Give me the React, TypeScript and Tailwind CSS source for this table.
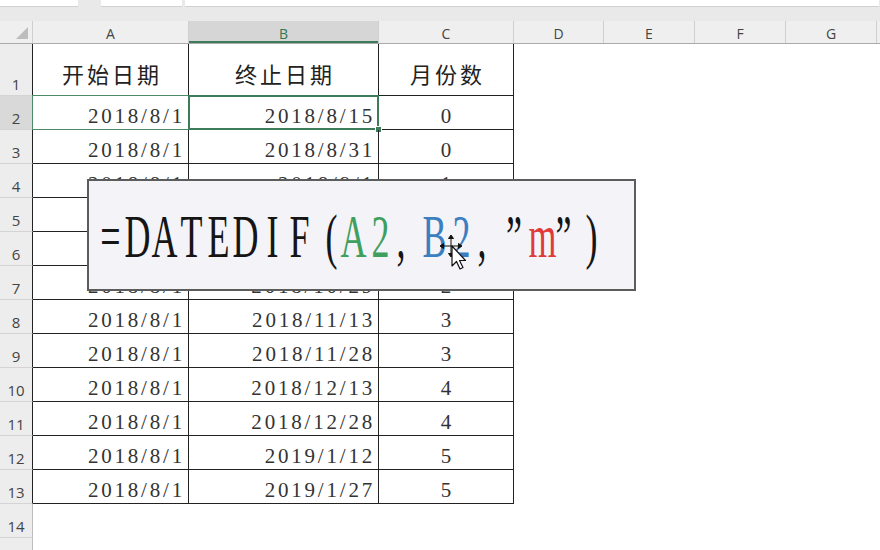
import React from 'react';

const colWidths = ['w-[156px]', 'w-[190px]', 'w-[135px]', 'w-[90px]', 'w-[91px]', 'w-[91px]', 'w-[91px]'];
const letters = ['A', 'B', 'C', 'D', 'E', 'F', 'G'];

const rows: [string, string, string][] = [
  ['2018/8/1', '2018/8/15', '0'],
  ['2018/8/1', '2018/8/31', '0'],
  ['2018/8/1', '2018/9/1', '1'],
  ['2018/8/1', '2018/9/15', '1'],
  ['2018/8/1', '2018/10/1', '2'],
  ['2018/8/1', '2018/10/29', '2'],
  ['2018/8/1', '2018/11/13', '3'],
  ['2018/8/1', '2018/11/28', '3'],
  ['2018/8/1', '2018/12/13', '4'],
  ['2018/8/1', '2018/12/28', '4'],
  ['2018/8/1', '2019/1/12', '5'],
  ['2018/8/1', '2019/1/27', '5'],
];

const ink = 'text-[#151515]';

// formula shown in the callout, one fixed-width cell per character
const formula: [string, string][] = [
  ['=', ink],
  ['D', ink],
  ['A', ink],
  ['T', ink],
  ['E', ink],
  ['D', ink],
  ['I', ink],
  ['F', ink],
  ['(', `${ink} pl-[10px]`],
  ['A', 'text-[#3f9f5f]'],
  ['2', 'text-[#3f9f5f]'],
  [',', `${ink} pr-[13px]`],
  ['B', 'text-[#3b7fc0]'],
  ['2', 'text-[#3b7fc0]'],
  [',', `${ink} pr-[13px]`],
  ['”', `${ink} pr-[3px]`],
  ['m', 'text-[#e03b3b]'],
  ['”', `${ink} pr-[12px]`],
  [')', `${ink} pr-[10px]`],
];

const serif = "font-['Liberation_Serif',serif] text-[21px] leading-none text-[#333]";

function RowHead({ n, inTable, active }: { n: number; inTable?: boolean; active?: boolean }) {
  return (
    <div
      className={`flex w-[33px] shrink-0 items-end justify-center border-b border-b-[#d4d4d4] border-r pb-[3px] font-['Open_Sans',sans-serif] text-[15px] leading-none text-[#444] ${
        active ? 'bg-[#d9d9d9]' : 'bg-[#ededed]'
      } ${inTable ? 'border-r-[#222]' : 'border-r-[#bdbdbd]'}`}
    >
      {n}
    </div>
  );
}

function Cursor() {
  return (
    <svg className="pointer-events-none absolute left-[436px] top-[231px]" width="34" height="42" viewBox="0 0 34 42">
      <g stroke="#111" strokeWidth="1" fill="#111">
        <line x1="15" y1="6" x2="15" y2="24" />
        <line x1="6" y1="15" x2="24" y2="15" />
        <path d="M15 4 L12.5 7.5 L17.5 7.5 Z" />
        <path d="M15 26 L12.5 22.5 L17.5 22.5 Z" />
        <path d="M4 15 L7.5 12.5 L7.5 17.5 Z" />
        <path d="M26 15 L22.5 12.5 L22.5 17.5 Z" />
      </g>
      <path
        d="M16 15 L16 35 L20.5 30.5 L24 38 L27 36.5 L23.5 29.5 L29.5 29.5 Z"
        fill="#fff"
        stroke="#111"
        strokeWidth="1.2"
        strokeLinejoin="round"
      />
    </svg>
  );
}

export default function App() {
  return (
    <div className="relative h-[550px] w-[880px] overflow-hidden bg-white">
      {/* formula bar remnants */}
      <div className="flex h-[21px] gap-[23px] bg-[#e9e9e9]">
        <div className="h-[7px] w-[78px] border-b border-[#d0d0d0] bg-white" />
        <div className="flex gap-[3px]">
          <div className="h-[7px] w-[81px] border-b border-[#d0d0d0] bg-white" />
          <div className="h-[7px] w-[694px] border-b border-[#d0d0d0] bg-white" />
        </div>
      </div>

      {/* column headers */}
      <div className="flex h-[23px] border-b border-[#ababab] bg-[#efefef]">
        <div className="relative w-[33px] shrink-0 border-r border-[#cfcfcf]">
          <svg className="absolute left-0 top-0" width="33" height="22" viewBox="0 0 33 22">
            <path d="M28 6 L28 18 L16 18 Z" fill="#bdbdbd" />
          </svg>
        </div>
        {letters.map((l, i) => (
          <div
            key={l}
            className={`flex shrink-0 items-end justify-center border-r border-r-[#cfcfcf] pb-[2px] font-['Open_Sans',sans-serif] text-[14px] leading-none ${colWidths[i]} ${
              l === 'B' ? 'bg-[#d6d6d6] text-[#2f7a52] shadow-[inset_0_-2px_0_#3c7c5a]' : 'text-[#444]'
            }`}
          >
            {l}
          </div>
        ))}
        <div className="flex-1" />
      </div>

      {/* row 1: titles */}
      <div className="flex h-[52px]">
        <RowHead n={1} inTable />
        {['开始日期', '终止日期', '月份数'].map((t, i) => (
          <div
            key={t}
            className={`flex shrink-0 items-end justify-center border-b border-r border-[#222] pb-[11px] pl-[3px] font-['Noto_Sans_CJK_SC',sans-serif] text-[22px] leading-none tracking-[3px] text-[#222] ${colWidths[i]}`}
          >
            {t}
          </div>
        ))}
        <div className="flex-1" />
      </div>

      {/* data rows */}
      {rows.map((r, idx) => {
        const n = idx + 2;
        const active = n === 2;
        return (
          <div key={n} className="flex h-[34px]">
            <RowHead n={n} inTable active={active} />
            <div className={`relative flex shrink-0 items-end justify-end border-b border-r border-[#222] pb-[2px] pr-[3px] tracking-[2.8px] ${serif} ${colWidths[0]}`}>
              {r[0]}
              {active && <div className="pointer-events-none absolute inset-[-1px] border border-[#4c8a68]" />}
            </div>
            <div className={`relative flex shrink-0 items-end justify-end border-b border-r border-[#222] pb-[2px] pr-[3px] tracking-[2.8px] ${serif} ${colWidths[1]}`}>
              {r[1]}
              {active && (
                <>
                  <div className="pointer-events-none absolute -left-px -top-px bottom-[-1px] right-[-1px] border-2 border-[#3c7c5a]" />
                  <div className="absolute -bottom-[4px] -right-[4px] h-[7px] w-[7px] border border-white bg-[#3c7c5a]" />
                </>
              )}
            </div>
            <div className={`flex shrink-0 items-end justify-center border-b border-r border-[#222] pb-[2px] ${serif} ${colWidths[2]}`}>
              {r[2]}
            </div>
            <div className="flex-1" />
          </div>
        );
      })}

      <div className="flex h-[34px]">
        <RowHead n={14} />
        <div className="flex-1" />
      </div>
      <div className="flex h-[20px]">
        <div className="w-[33px] shrink-0 border-r border-[#bdbdbd] bg-[#ededed]" />
        <div className="flex-1" />
      </div>

      {/* formula callout */}
      <div className="absolute left-[87px] top-[179px] flex h-[112px] w-[549px] items-center border-2 border-[#5c5c5c] bg-[#f4f3f8] pl-[8px] pt-[4px]">
        <div className="flex origin-center scale-y-[1.68] font-['Liberation_Serif','DejaVu_Serif',serif] text-[36px] leading-none">
          {formula.map(([ch, cls], i) => (
            <span key={i} className={`inline-flex w-[27px] justify-center ${cls}`}>
              {ch}
            </span>
          ))}
        </div>
      </div>

      <Cursor />
    </div>
  );
}
